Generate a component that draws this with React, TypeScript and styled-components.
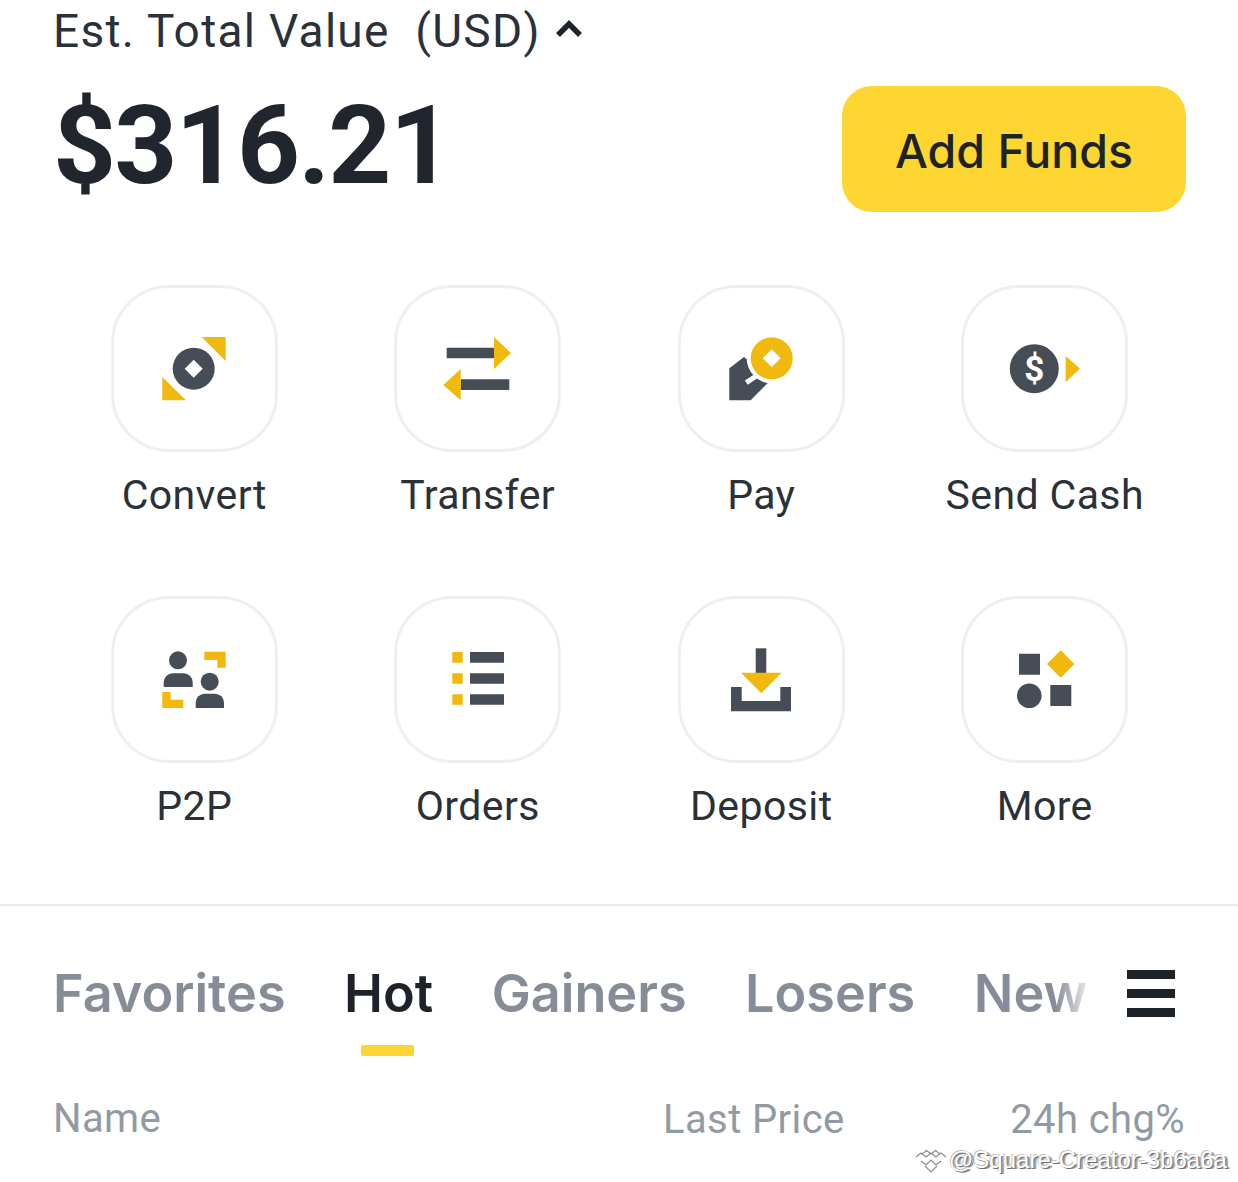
import React from "react";
import styled, { createGlobalStyle } from "styled-components";

const dark = "#474d57";
const gold = "#f0b90b";

const GlobalStyle = createGlobalStyle`
  html, body {
    margin: 0;
    padding: 0;
    background: #fff;
  }
  body {
    font-family: Roboto, "Liberation Sans", sans-serif;
    overflow: hidden;
  }
`;

const Page = styled.div`
  position: relative;
  width: 1238px;
  height: 1182px;
  overflow: hidden;
  background: #fff;
`;

const Summary = styled.section`
  padding: 0 52px 0 53px;
  height: 212px;
  display: flex;
  justify-content: space-between;
`;

const Balance = styled.div`
  display: flex;
  flex-direction: column;
`;

const BalanceLabel = styled.div`
  display: flex;
  align-items: center;
  height: 62px;
  font-size: 46px;
  letter-spacing: 1.3px;
  color: #2b3139;
  white-space: pre;
  svg {
    margin-left: 14px;
    margin-top: -5px;
  }
`;

const Amount = styled.div`
  margin-top: 24px;
  font-size: 110px;
  line-height: 120px;
  font-weight: 700;
  letter-spacing: -1.8px;
  color: #21252d;
`;

const AddFunds = styled.button`
  align-self: flex-end;
  width: 344px;
  height: 126px;
  padding: 3px 0 0;
  border: none;
  border-radius: 30px;
  background: #fed631;
  color: #1e2329;
  font-family: Inter, "Liberation Sans", sans-serif;
  font-size: 46.5px;
  font-weight: 500;
`;

const Shortcuts = styled.section`
  display: grid;
  grid-template-columns: repeat(4, 1fr);
  row-gap: 74px;
  padding: 73px 51.5px 0 52.5px;
  height: 694px;
  box-sizing: border-box;
  border-bottom: 2px solid #e9eaeb;
  align-content: start;
`;

const Shortcut = styled.div`
  display: flex;
  flex-direction: column;
  align-items: center;
`;

const Tile = styled.div`
  width: 167px;
  height: 167px;
  box-sizing: border-box;
  border: 3px solid #eeefef;
  border-radius: 58px;
  display: flex;
  align-items: center;
  justify-content: center;
`;

const ShortcutLabel = styled.div`
  margin-top: 16px;
  font-size: 41px;
  line-height: 54px;
  letter-spacing: 0.4px;
  color: #2b3139;
`;

const TabBar = styled.nav`
  display: flex;
  align-items: flex-start;
  padding: 53px 63px 0 53px;
  height: 186px;
  box-sizing: border-box;
  justify-content: space-between;
`;

const Tabs = styled.div`
  display: flex;
  gap: 58.5px;
`;

const Tab = styled.div<{ $active?: boolean; $faded?: boolean }>`
  position: relative;
  font-family: Inter, "Liberation Sans", sans-serif;
  font-size: 52.2px;
  line-height: 68px;
  font-weight: 600;
  color: ${(p) => (p.$active ? "#1e2329" : "#878d98")};
  ${(p) =>
    p.$faded &&
    `
    background: linear-gradient(to right, #878d98 72%, #e4e6e9 100%);
    -webkit-background-clip: text;
    background-clip: text;
    color: transparent;
  `}
`;

const TabMarker = styled.span`
  position: absolute;
  left: 17px;
  top: 86px;
  width: 53px;
  height: 11px;
  border-radius: 2px;
  background: #fcd535;
`;

const MenuIcon = styled.div`
  display: flex;
  flex-direction: column;
  gap: 10px;
  margin-top: 11px;
  span {
    display: block;
    width: 48px;
    height: 9px;
    background: #1e2329;
  }
`;

const TableHead = styled.div`
  display: grid;
  grid-template-columns: 610px 344px 1fr;
  padding: 0 53px;
  font-size: 40px;
  line-height: 54px;
  letter-spacing: 0.4px;
  color: #929aa5;
`;

const HeadCell = styled.div<{ $right?: boolean; $drop?: number }>`
  text-align: ${(p) => (p.$right ? "right" : "left")};
  margin-top: ${(p) => p.$drop ?? 0}px;
  white-space: nowrap;
`;

const Watermark = styled.div`
  position: absolute;
  left: 915px;
  top: 1146px;
  display: flex;
  align-items: center;
  gap: 2px;
`;

const WatermarkText = styled.div`
  font-family: "Liberation Sans", sans-serif;
  font-size: 24px;
  line-height: 28px;
  color: #fff;
  white-space: nowrap;
  text-shadow:
    1px 1px 0 #6f6f6f,
    -1px -1px 0 #c4c4c4,
    3px 1px 0 #a8a8a8;
`;

const ConvertIcon = () => (
  <svg width="72" height="72" viewBox="0 0 72 72">
    <path d="M43.7 4h24v24z" fill={gold} />
    <path d="M4.3 44v23.3H28z" fill={gold} />
    <circle cx="35.7" cy="35.7" r="21" fill={dark} />
    <path d="M35.7 26.7l9 9-9 9-9-9z" fill="#fff" strokeLinejoin="round" />
  </svg>
);

const TransferIcon = () => (
  <svg width="72" height="72" viewBox="0 0 72 72">
    <path d="M4.7 14.7H52v10.6H4.7zM18.7 46.3h48.6V57H18.7z" fill={dark} />
    <path d="M52 4l17 16-17 16zM18.7 36L1.3 52l17.4 15.3z" fill={gold} />
  </svg>
);

const PayIcon = () => (
  <svg width="72" height="72" viewBox="0 0 72 72">
    <path d="M4.3 67.3v-32L19 24l24 20v5.7L25.7 67.3z" fill={dark} />
    <path d="M31.3 43L21.3 49.7" stroke="#fff" strokeWidth="5" fill="none" />
    <circle cx="46.7" cy="25.3" r="25" fill="#fff" />
    <circle cx="46.7" cy="25.3" r="21" fill={gold} />
    <path d="M46.7 16.3l9 9-9 9-9-9z" fill="#fff" />
  </svg>
);

const SendCashIcon = () => (
  <svg width="72" height="72" viewBox="0 0 72 72">
    <circle cx="25.3" cy="35.7" r="24.5" fill={dark} />
    <text
      x="25.3"
      y="48"
      textAnchor="middle"
      fontFamily="Roboto, sans-serif"
      fontWeight="700"
      fontSize="35"
      fill="#fff"
    >
      $
    </text>
    <path d="M56.7 23L71 35.7 56.7 49z" fill={gold} />
  </svg>
);

const P2PIcon = () => (
  <svg width="72" height="72" viewBox="0 0 72 72">
    <circle cx="20" cy="16.3" r="9" fill={dark} />
    <path d="M5.7 43v-4.7a9 9 0 0 1 9-9h11a9 9 0 0 1 9 9V43z" fill={dark} />
    <circle cx="51.7" cy="37.7" r="9" fill={dark} />
    <path d="M37.7 64v-5.3a9 9 0 0 1 9-9H57a9 9 0 0 1 9 9V64z" fill={dark} />
    <path d="M46.3 7.7h21.4v16h-8.4V16h-13z" fill={gold} />
    <path d="M4.3 48h8.4v7.7h12.6V64h-21z" fill={gold} />
  </svg>
);

const OrdersIcon = () => (
  <svg width="72" height="72" viewBox="0 0 72 72">
    <path d="M10.3 8h10.4v10.7H10.3zM10.3 29.3h10.4v10.4H10.3zM10.3 50.3h10.4v10.4H10.3z" fill={gold} />
    <path d="M28 8h34v10.7H28zM28 29.3h34v10.4H28zM28 50.3h34v10.4H28z" fill={dark} />
  </svg>
);

const DepositIcon = () => (
  <svg width="72" height="72" viewBox="0 0 72 72">
    <path d="M30.7 4.3h10.6v25H30.7z" fill={dark} />
    <path d="M6 43h10.7v14h38.6V43H66v24.3H6z" fill={dark} />
    <path d="M16 28.7h40.7L36.3 49.3z" fill={gold} />
  </svg>
);

const MoreIcon = () => (
  <svg width="72" height="72" viewBox="0 0 72 72">
    <path d="M10 9.7h21v21H10zM41.3 41h21v21h-21z" fill={dark} />
    <circle cx="20.3" cy="51.7" r="12.3" fill={dark} />
    <path d="M51.7 6.3L65.4 20 51.7 33.7 38 20z" fill={gold} />
  </svg>
);

const WatermarkLogo = () => (
  <svg width="32" height="28" viewBox="0 0 32 28" fill="none" stroke="#8a8a8a" strokeWidth="1.1">
    <path d="M7 8l4.500-3.500 4.500 3.500 4.500-3.500L25 8" />
    <path d="M1 11l5-4 5 4 5-4 5 4 5-4 5 4" />
    <path d="M6 15l5 4 5-5 5 5 5-4" />
    <path d="M10 20l6 6 6-6" />
  </svg>
);

const shortcuts = [
  { label: "Convert", icon: <ConvertIcon /> },
  { label: "Transfer", icon: <TransferIcon /> },
  { label: "Pay", icon: <PayIcon /> },
  { label: "Send Cash", icon: <SendCashIcon /> },
  { label: "P2P", icon: <P2PIcon /> },
  { label: "Orders", icon: <OrdersIcon /> },
  { label: "Deposit", icon: <DepositIcon /> },
  { label: "More", icon: <MoreIcon /> },
];

const App = () => {
  return (
    <Page>
      <GlobalStyle />
      <Summary>
        <Balance>
          <BalanceLabel>
            {"Est. Total Value  (USD)"}
            <svg width="28" height="18" viewBox="0 0 28 18" fill="none">
              <path d="M3 15L14 4l11 11" stroke="#1e2329" strokeWidth="5.5" />
            </svg>
          </BalanceLabel>
          <Amount>$316.21</Amount>
        </Balance>
        <AddFunds>Add Funds</AddFunds>
      </Summary>

      <Shortcuts>
        {shortcuts.map((item) => (
          <Shortcut key={item.label}>
            <Tile>{item.icon}</Tile>
            <ShortcutLabel>{item.label}</ShortcutLabel>
          </Shortcut>
        ))}
      </Shortcuts>

      <TabBar>
        <Tabs>
          <Tab>Favorites</Tab>
          <Tab $active>
            Hot
            <TabMarker />
          </Tab>
          <Tab>Gainers</Tab>
          <Tab>Losers</Tab>
          <Tab $faded>New</Tab>
        </Tabs>
        <MenuIcon>
          <span />
          <span />
          <span />
        </MenuIcon>
      </TabBar>

      <TableHead>
        <HeadCell>Name</HeadCell>
        <HeadCell $drop={1}>Last Price</HeadCell>
        <HeadCell $right $drop={1}>
          24h chg%
        </HeadCell>
      </TableHead>

      <Watermark>
        <WatermarkLogo />
        <WatermarkText>@Square-Creator-3b6a6a</WatermarkText>
      </Watermark>
    </Page>
  );
};

export default App;
